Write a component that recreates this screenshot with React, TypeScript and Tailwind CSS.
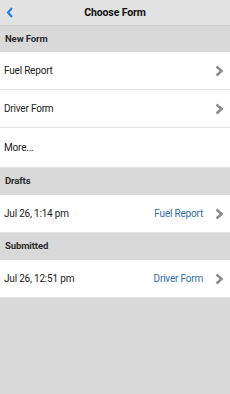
import React from 'react';

const font = { fontFamily: 'Roboto, "Liberation Sans", sans-serif' };

function Chevron() {
  return (
    <svg width="10" height="12" viewBox="0 0 10 12" className="shrink-0">
      <path d="M2.5 1.5 L7.5 6 L2.5 10.5" fill="none" stroke="#8c8c8c" strokeWidth="2.6" />
    </svg>
  );
}

function SectionHeader({ title }: { title: string }) {
  return (
    <div className="h-[27px] bg-[#d9d9d9] flex items-center px-[5px] text-[9.5px] font-bold text-[#2b2b2b] tracking-[-0.1px]">
      {title}
    </div>
  );
}

interface RowProps {
  label: string;
  link?: string;
  chevron?: boolean;
  tall?: boolean;
}

function Row({ label, link, chevron = true, tall = false }: RowProps) {
  return (
    <div
      className={`${tall ? 'h-[40px]' : 'h-[38px]'} bg-white border-b border-[#e3e3e3] flex items-center pl-[4px] pr-[6px] text-[10px] tracking-[-0.2px] text-[#222]`}
    >
      <span className="flex-1">{label}</span>
      {link && <span className="text-[#2f6fae] mr-[11px]">{link}</span>}
      {chevron && <Chevron />}
    </div>
  );
}

export default function App() {
  return (
    <div className="min-h-screen bg-[#d9d9d9] flex flex-col" style={font}>
      {/* Title bar */}
      <div className="h-[26px] bg-[#e2e2e2] border-b border-[#cdcdcd] flex items-center relative">
        <svg width="8" height="11" viewBox="0 0 8 11" className="absolute left-[6px] top-[7px]">
          <path d="M6 1 L2 5.5 L6 10" fill="none" stroke="#1f7be0" strokeWidth="2" />
        </svg>
        <div className="flex-1 text-center text-[10.5px] font-bold text-[#111] tracking-[-0.1px]">Choose Form</div>
      </div>

      <div className="h-[26px] bg-[#d9d9d9] flex items-center px-[5px] text-[9.5px] font-bold text-[#2b2b2b] tracking-[-0.1px]">
        New Form
      </div>
      <Row label="Fuel Report" />
      <Row label="Driver Form" />
      <Row label="More..." chevron={false} tall />

      <SectionHeader title="Drafts" />
      <Row label="Jul 26, 1:14 pm" link="Fuel Report" />

      <SectionHeader title="Submitted" />
      <Row label="Jul 26, 12:51 pm" link="Driver Form" />
    </div>
  );
}
